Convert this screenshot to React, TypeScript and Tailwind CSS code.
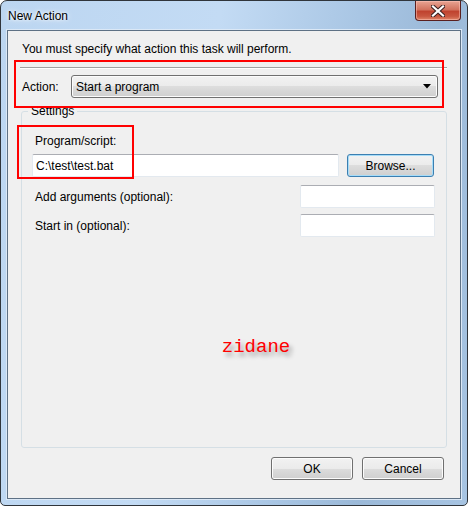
import React from "react";

const font = { fontFamily: '"Liberation Sans", "Noto Sans", sans-serif' };

function Btn({ children, primary, className }: { children: React.ReactNode; primary?: boolean; className?: string }) {
  return (
    <div
      className={
        "flex items-center justify-center rounded-[3px] border text-[12px] text-black " +
        (primary
          ? "border-[#3c7fb1] shadow-[inset_0_0_0_1px_#a6dcf8] bg-[linear-gradient(to_bottom,#f2f2f2_0%,#ebebeb_50%,#dddddd_50%,#cfcfcf_100%)] "
          : "border-[#707070] shadow-[inset_0_0_0_1px_#fcfcfc] bg-[linear-gradient(to_bottom,#f2f2f2_0%,#ebebeb_50%,#dddddd_50%,#cfcfcf_100%)] ") +
        (className ?? "")
      }
    >
      {children}
    </div>
  );
}

function Input({ value, className }: { value?: string; className?: string }) {
  return (
    <div
      className={
        "flex items-center rounded-[2px] border border-[#e3e9ef] border-t-[#abadb3] bg-white pl-[3px] text-[12px] text-black " +
        (className ?? "")
      }
    >
      {value}
    </div>
  );
}

export default function App() {
  return (
    <div
      style={font}
      className="relative flex h-[506px] w-[468px] flex-col overflow-hidden rounded-t-[7px] rounded-b-[5px] border border-[#30353b] bg-[linear-gradient(100deg,#bcd6f1_0%,#c3dbf4_40%,#a9c6e4_65%,#9bb9d8_80%,#a7c4e2_100%)]"
    >
      {/* title bar */}
      <div className="flex h-[29px] shrink-0 items-start justify-between">
        <div className="pl-[7px] pt-[6px] text-[12px] text-black [text-shadow:0_0_6px_#ffffff,0_0_3px_#ffffff]">New Action</div>
        <div className="mr-[6px] flex h-[20px] w-[46px] items-center justify-center rounded-b-[4px] border border-t-0 border-[#5a1f1f] bg-[linear-gradient(to_bottom,#e8a493_0%,#d2735f_45%,#c0432f_55%,#c8563f_80%,#e0866a_100%)] shadow-[inset_0_0_0_1px_rgba(255,200,190,0.5)]">
          <svg width="14" height="12" viewBox="0 0 14 12">
            <path d="M2 1.5 L12 10.5 M12 1.5 L2 10.5" stroke="#3b2020" strokeWidth="4.2" strokeLinecap="square" />
            <path d="M2 1.5 L12 10.5 M12 1.5 L2 10.5" stroke="#ffffff" strokeWidth="2.2" strokeLinecap="square" />
          </svg>
        </div>
      </div>

      {/* client area */}
      <div className="relative mx-[6px] flex h-[469px] flex-col border border-[#5e7185] bg-[#f0f0f0] shadow-[0_0_0_1px_#dbe8f6]">
        <div className="pl-[14px] pt-[11px] text-[12px] leading-[15px] text-black">
          You must specify what action this task will perform.
        </div>
        {/* separator */}
        <div className="ml-[12px] mr-[13px] mt-[10px] h-[2px] border-t border-[#a0a0a0] border-b-white bg-white" />
        {/* action row */}
        <div className="mt-[6px] flex items-center pl-[14px]">
          <div className="w-[49px] text-[12px] text-black">Action:</div>
          <div className="flex h-[23px] w-[367px] items-center justify-between rounded-[3px] border border-[#707070] bg-[linear-gradient(to_bottom,#f2f2f2_0%,#ebebeb_50%,#dddddd_50%,#cfcfcf_100%)] pl-[4px] pr-[6px] text-[12px] text-black shadow-[inset_0_0_0_1px_#fcfcfc]">
            <span>Start a program</span>
            <svg width="8" height="5" viewBox="0 0 8 5">
              <path d="M0 0 H8 L4 4.5 Z" fill="#000" />
            </svg>
          </div>
        </div>

        {/* settings group */}
        <fieldset className="ml-[13px] mr-[13px] mt-[6px] flex h-[344px] flex-col rounded-[3px] border border-[#d5dfe5] px-[10px]">
          <legend className="ml-[-4px] px-[3px] text-[12px] leading-[14px] text-black">Settings</legend>
          <div className="mt-[16px] pl-[3px] text-[12px] leading-[15px] text-black">Program/script:</div>
          <div className="mt-[5px] flex items-center">
            <Input value="C:\test\test.bat" className="h-[23px] w-[307px]" />
            <Btn primary className="ml-[8px] h-[23px] w-[87px]">Browse...</Btn>
          </div>
          <div className="mt-[8px] flex items-center justify-between pr-[1px]">
            <div className="pl-[3px] text-[12px] text-black">Add arguments (optional):</div>
            <Input className="h-[23px] w-[135px]" />
          </div>
          <div className="mt-[6px] flex items-center justify-between pr-[1px]">
            <div className="pl-[3px] text-[12px] text-black">Start in (optional):</div>
            <Input className="h-[23px] w-[135px]" />
          </div>
          <div className="mt-[99px] flex justify-center pl-[44px]">
            <span
              className="text-[19px] leading-[22px] text-[#ff0000] [text-shadow:3px_4px_4px_rgba(0,0,0,0.35)]"
              style={{ fontFamily: '"Liberation Mono", "DejaVu Sans Mono", monospace' }}
            >
              zidane
            </span>
          </div>
        </fieldset>

        {/* buttons */}
        <div className="mt-[9px] flex justify-end gap-[9px] pr-[16px]">
          <Btn className="h-[23px] w-[82px]">OK</Btn>
          <Btn className="h-[23px] w-[82px]">Cancel</Btn>
        </div>

        {/* red annotation boxes */}
        <div className="pointer-events-none absolute left-[6px] top-[29px] h-[48px] w-[430px] border-2 border-[#ff0000]" />
        <div className="pointer-events-none absolute left-[9px] top-[94px] h-[54px] w-[117px] border-2 border-[#ff0000]" />
      </div>
    </div>
  );
}
